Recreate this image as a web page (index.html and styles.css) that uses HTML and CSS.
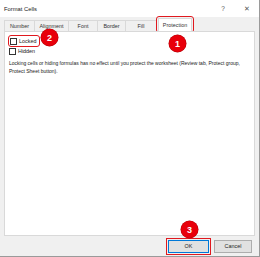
FILE: index.html
```html
<!DOCTYPE html>
<html>
<head>
<meta charset="utf-8">
<link rel="stylesheet" href="styles.css">
</head>
<body>
<div class="dialog">
  <div class="titlebar">
    <span class="title">Format Cells</span>
    <span class="tb-btn help">?</span>
    <span class="tb-btn close">✕</span>
  </div>
  <div class="tabs">
    <div class="tab w-number">Number</div>
    <div class="tab w-align">Alignment</div>
    <div class="tab w-font">Font</div>
    <div class="tab w-border">Border</div>
    <div class="tab w-fill">Fill</div>
    <div class="tab active hl">Protection</div>
  </div>
  <div class="panel">
    <label class="check hl"><span class="box"></span>Locked</label>
    <label class="check"><span class="box"></span>Hidden</label>
    <p class="note">Locking cells or hiding formulas has no effect until you protect the worksheet (Review tab, Protect group, Protect Sheet button).</p>
  </div>
  <div class="footer">
    <button class="btn ok hl">OK</button>
    <button class="btn">Cancel</button>
  </div>
  <span class="badge b1">1</span>
  <span class="badge b2">2</span>
  <span class="badge b3">3</span>
</div>
</body>
</html>
```
FILE: styles.css
```css
* { box-sizing: border-box; }
html, body { margin: 0; padding: 0; }
body {
  width: 260px;
  height: 257px;
  font-family: "Liberation Sans", Arial, sans-serif;
  font-size: 5.4px;
  color: #1a1a1a;
  overflow: hidden;
}
.dialog {
  position: relative;
  width: 260px;
  height: 257px;
  background: #f0f0f0;
  border-right: 1px solid #9a9a9a;
  border-bottom: 1px solid #9a9a9a;
  display: flex;
  flex-direction: column;
}
.titlebar {
  height: 17px;
  background: #fff;
  display: flex;
  align-items: center;
  padding: 0 0 0 4px;
}
.title { font-size: 5.8px; flex: 1; color: #222; }
.tb-btn { font-size: 6.5px; color: #555; text-align: center; }
.help { width: 10px; margin-right: 14px; }
.close { width: 10px; margin-right: 7px; font-size: 7px; }
.tabs {
  height: 14px;
  display: flex;
  align-items: flex-end;
  padding-left: 4px;
}
.tab {
  height: 11px;
  display: flex;
  align-items: center;
  justify-content: center;
  border: 1px solid #d9d9d9;
  border-bottom: none;
  border-right: none;
  background: #f0f0f0;
  color: #333;
}
.w-number { width: 30px; }
.w-align { width: 34px; }
.w-font { width: 29px; }
.w-border { width: 28px; }
.w-fill { width: 32px; border-right: 1px solid #d9d9d9; }
.tab.active {
  width: 34px;
  height: 13px;
  background: #fff;
  border: 1px solid #d9d9d9;
  border-bottom: none;
  margin-left: 1px;
}
.hl {
  outline: 1.4px solid #e0191f;
  outline-offset: 1px;
  border-radius: 1px;
}
.panel {
  flex: 1;
  margin: 0 4px;
  background: #fff;
  border: 1px solid #d9d9d9;
  padding: 3px 0 0 4px;
  display: flex;
  flex-direction: column;
  align-items: flex-start;
}
.check {
  display: flex;
  align-items: center;
  height: 8px;
  margin-top: 2px;
  padding-right: 2px;
}
.check.hl { margin-left: 1px; }
.box {
  width: 7px;
  height: 7px;
  border: 1px solid #333;
  background: #fff;
  margin-right: 2px;
}
.note {
  margin: 4px 0 0 0;
  line-height: 8px;
  font-size: 5px;
  width: 245px;
}
.footer {
  height: 20px;
  display: flex;
  justify-content: flex-end;
  align-items: center;
  padding-right: 7px;
  gap: 5px;
}
.btn {
  font-family: "Liberation Sans", Arial, sans-serif;
  font-size: 5.4px;
  color: #222;
  height: 13px;
  background: #e1e1e1;
  border: 1px solid #adadad;
  border-radius: 0;
  padding: 0;
  width: 38px;
}
.btn.ok {
  width: 41px;
  border-color: #0078d7;
}
.badge {
  position: absolute;
  width: 17px;
  height: 17px;
  border-radius: 50%;
  background: #e8000b;
  color: #fff;
  font-weight: bold;
  font-size: 9px;
  display: flex;
  align-items: center;
  justify-content: center;
  box-shadow: 0 0 0 0.5px #b00008;
}
.b1 { left: 169px; top: 35px; }
.b2 { left: 41px; top: 29px; }
.b3 { left: 181px; top: 221px; }
```
